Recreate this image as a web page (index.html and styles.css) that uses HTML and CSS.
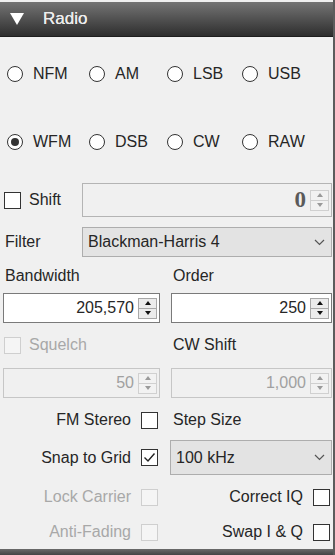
FILE: index.html
```html
<!DOCTYPE html>
<html lang="en">
<head>
  <meta charset="UTF-8" />
  <meta name="viewport" content="width=device-width, initial-scale=1.0"/>
  <title>Radio</title>
  <link rel="stylesheet" href="styles.css">
</head>
<body>
  <div class="panel">
    <div class="header">
      <span class="caret"></span>
      <span class="title">Radio</span>
    </div>

    <div class="content">
      <div class="modes">
        <div class="mode-row">
          <label class="radio"><span class="circle"></span>NFM</label>
          <label class="radio"><span class="circle"></span>AM</label>
          <label class="radio"><span class="circle"></span>LSB</label>
          <label class="radio"><span class="circle"></span>USB</label>
        </div>
        <div class="mode-row">
          <label class="radio"><span class="circle checked"></span>WFM</label>
          <label class="radio"><span class="circle"></span>DSB</label>
          <label class="radio"><span class="circle"></span>CW</label>
          <label class="radio"><span class="circle"></span>RAW</label>
        </div>
      </div>

      <div class="wide-row shift-row">
        <label class="check"><span class="box"></span>Shift</label>
        <div class="num off shift">
          <span class="value big">0</span>
          <span class="spin"><span class="up"></span><span class="down"></span></span>
        </div>
      </div>

      <div class="wide-row filter-row">
        <span class="lbl">Filter</span>
        <div class="combo">
          <span>Blackman-Harris 4</span>
          <svg class="chev" width="11" height="7" viewBox="0 0 11 7"><polyline points="1,1 5.5,5.5 10,1" fill="none" stroke="#555" stroke-width="1.2"/></svg>
        </div>
      </div>

      <div class="cols label-row">
        <span class="lbl">Bandwidth</span>
        <span class="lbl">Order</span>
      </div>

      <div class="cols input-row">
        <div class="num">
          <span class="value">205,570</span>
          <span class="spin"><span class="up"></span><span class="down"></span></span>
        </div>
        <div class="num">
          <span class="value">250</span>
          <span class="spin"><span class="up"></span><span class="down"></span></span>
        </div>
      </div>

      <div class="cols squelch-row">
        <label class="check disabled"><span class="box"></span>Squelch</label>
        <span class="lbl">CW Shift</span>
      </div>

      <div class="cols input-row second">
        <div class="num off">
          <span class="value">50</span>
          <span class="spin"><span class="up"></span><span class="down"></span></span>
        </div>
        <div class="num off">
          <span class="value">1,000</span>
          <span class="spin"><span class="up"></span><span class="down"></span></span>
        </div>
      </div>

      <div class="cols opt-row stereo-row">
        <label class="check right"><span class="text">FM Stereo</span><span class="box"></span></label>
        <span class="lbl">Step Size</span>
      </div>

      <div class="cols snap-row">
        <label class="check right"><span class="text">Snap to Grid</span>
          <span class="box">
            <svg width="15" height="15" viewBox="0 0 15 15"><polyline points="2.5,7.5 6,11 12.5,3.5" fill="none" stroke="#222" stroke-width="1.4"/></svg>
          </span>
        </label>
        <div class="combo">
          <span>100 kHz</span>
          <svg class="chev" width="11" height="7" viewBox="0 0 11 7"><polyline points="1,1 5.5,5.5 10,1" fill="none" stroke="#555" stroke-width="1.2"/></svg>
        </div>
      </div>

      <div class="cols opt-row lock-row">
        <label class="check right disabled"><span class="text">Lock Carrier</span><span class="box"></span></label>
        <label class="check right"><span class="text">Correct IQ</span><span class="box"></span></label>
      </div>

      <div class="cols opt-row fade-row">
        <label class="check right disabled"><span class="text">Anti-Fading</span><span class="box"></span></label>
        <label class="check right"><span class="text">Swap I &amp; Q</span><span class="box"></span></label>
      </div>
    </div>

    <div class="footer"></div>
  </div>
</body>
</html>
```

FILE: styles.css
```css
body {
  margin: 0;
  background: #f0f0f0;
  font-family: "Liberation Sans", Arial, sans-serif;
  font-size: 16px;
  color: #262626;
}
.panel {
  width: 335px;
  height: 555px;
  box-sizing: border-box;
  border-right: 2px solid #5c5c5c;
  display: flex;
  flex-direction: column;
}
.header {
  margin-top: 2px;
  height: 35px;
  box-sizing: border-box;
  padding-left: 10px;
  display: flex;
  align-items: center;
  background: linear-gradient(#747474, #2e2e2e);
  border-bottom: 1px solid #1e1e1e;
}
.caret {
  width: 0;
  height: 0;
  border-left: 7px solid transparent;
  border-right: 7px solid transparent;
  border-top: 12px solid #fff;
}
.title {
  margin-left: 19px;
  color: #ececec;
  font-size: 17px;
  text-shadow: 0 0 0.4px #fff;
}
.content {
  flex: 1;
  padding: 0 1px 0 3px;
}

/* modes */
.modes {
  margin-top: 20px;
  padding-left: 4px;
}
.mode-row {
  display: grid;
  grid-template-columns: 82px 78px 75px auto;
  height: 34px;
  align-items: center;
}
.mode-row + .mode-row {
  margin-top: 34px;
}
.radio {
  display: flex;
  align-items: center;
  gap: 10px;
}
.circle {
  width: 16px;
  height: 16px;
  box-sizing: border-box;
  border: 1px solid #333;
  border-radius: 50%;
  background: #fff;
  display: flex;
  align-items: center;
  justify-content: center;
}
.circle.checked::after {
  content: "";
  width: 8px;
  height: 8px;
  border-radius: 50%;
  background: #333;
}

/* checkboxes */
.check {
  display: flex;
  align-items: center;
  gap: 8px;
  padding-left: 1px;
}
.check.right {
  justify-content: flex-end;
  gap: 10px;
  padding: 0 2px 0 0;
}
.box {
  width: 17px;
  height: 17px;
  box-sizing: border-box;
  border: 1px solid #333;
  background: #fff;
  display: flex;
  align-items: center;
  justify-content: center;
}
.check.disabled {
  color: #a8a8a8;
}
.check.disabled .box {
  border-color: #cfcfcf;
  background: #f5f5f5;
}
.lbl {
  padding-left: 2px;
}

/* rows */
.wide-row {
  display: grid;
  grid-template-columns: 79px 1fr;
  align-items: center;
}
.shift-row {
  margin-top: 24px;
  height: 34px;
}
.filter-row {
  margin-top: 10px;
  height: 30px;
}
.cols {
  display: grid;
  grid-template-columns: 157px 161px;
  column-gap: 11px;
  align-items: center;
}
.label-row {
  margin-top: 9px;
  height: 20px;
}
.input-row {
  margin-top: 7px;
  height: 30px;
}
.input-row.second {
  margin-top: 13px;
}
.squelch-row {
  margin-top: 12px;
  height: 20px;
}
.stereo-row {
  margin-top: 12px;
  height: 20px;
}
.snap-row {
  margin-top: 10px;
  height: 35px;
}
.lock-row {
  margin-top: 12px;
  height: 20px;
}
.fade-row {
  margin-top: 15px;
  height: 20px;
}

/* numeric fields */
.num {
  height: 100%;
  box-sizing: border-box;
  border: 1px solid #7a7a7a;
  background: #fff;
  display: flex;
  justify-content: flex-end;
  align-items: center;
  padding-right: 2px;
}
.num .value {
  margin-right: 4px;
}
.num.off {
  border-color: #c6c6c6;
  background: #f0f0f0;
  color: #a0a0a0;
}
.num.shift {
  border-color: #b4b4b4;
}
.value.big {
  font-family: "Liberation Serif", serif;
  font-weight: bold;
  font-size: 23px;
  color: #5a5a5a;
  margin-right: 4px;
}
.spin {
  width: 19px;
  height: 21px;
  display: flex;
  flex-direction: column;
}
.spin span {
  flex: 1;
  box-sizing: border-box;
  border: 1px solid #a8a8a8;
  background: #ececec;
  display: flex;
  align-items: center;
  justify-content: center;
}
.spin .down {
  border-top: none;
}
.spin .up::after,
.spin .down::after {
  content: "";
  width: 0;
  height: 0;
  border-left: 3.5px solid transparent;
  border-right: 3.5px solid transparent;
}
.spin .up::after {
  border-bottom: 4px solid #111;
}
.spin .down::after {
  border-top: 4px solid #111;
}
.num.off .spin span {
  border-color: #d0d0d0;
  background: #f2f2f2;
}
.num.off .spin .up::after {
  border-bottom-color: #9a9a9a;
}
.num.off .spin .down::after {
  border-top-color: #9a9a9a;
}

/* combo boxes */
.combo {
  height: 100%;
  box-sizing: border-box;
  border: 1px solid #adadad;
  background: #e3e3e3;
  display: flex;
  align-items: center;
  justify-content: space-between;
  padding: 0 5px 0 5px;
}
.chev {
  margin-right: 1px;
}
.snap-row .combo {
  margin-left: -1px;
}

.footer {
  height: 6px;
  background: linear-gradient(#6a6a6a, #444);
}
```
